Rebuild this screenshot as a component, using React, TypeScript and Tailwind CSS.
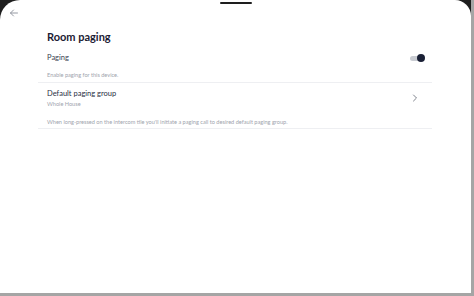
import React from "react";

export default function App() {
  return (
    <div className="w-[474px] h-[296px] bg-[#a5a5a5] pr-[3px] pb-[3px]" style={{ fontFamily: "Lato, 'Noto Sans', sans-serif" }}>
      <div className="w-full h-full bg-[#1e1e1e]">
        <div className="relative w-full h-full bg-white rounded-tl-[20px] rounded-tr-[16px]">
          <div className="absolute top-[2px] left-[220px] w-[32px] h-[2px] rounded-full bg-[#1e1e1e]" />
          <div className="pt-[8px] pl-[9px] h-[21px]">
            <svg width="10" height="10" viewBox="0 0 10 10" fill="none" stroke="#8a8f99" strokeWidth="0.9" strokeLinecap="round" strokeLinejoin="round">
              <path d="M8.5 5H1.5M4.5 2L1.5 5L4.5 8" />
            </svg>
          </div>
          <div className="ml-[38px] w-[394px]">
            <div className="pl-[9px] pt-[8px] h-[28px] text-[11px] leading-[16px] font-bold text-[#1c2033]">Room paging</div>
            <div className="border-b border-[#eeeff2] pl-[9px] pr-[7px] pb-[3px]">
              <div className="flex items-center justify-between h-[18px]">
                <span className="text-[7.5px] text-[#3a3f4f]">Paging</span>
                <div className="relative w-[15px] h-[9px] flex items-center">
                  <div className="w-[12px] h-[5px] rounded-full bg-[#c9ccd2]" />
                  <div className="absolute right-0 w-[8px] h-[8px] rounded-full bg-[#1a2036]" />
                </div>
              </div>
              <div className="mt-[4px] text-[5.6px] leading-[8px] text-[#a0a4ad]">Enable paging for this device.</div>
            </div>
            <div className="border-b border-[#eeeff2] pl-[9px] pr-[14px] pb-[2px]">
              <div className="flex items-center justify-between pt-[5px]">
                <div>
                  <div className="text-[7.5px] leading-[12px] text-[#2a2f3f]">Default paging group</div>
                  <div className="text-[5.6px] leading-[8px] text-[#a0a4ad]">Whole House</div>
                </div>
                <svg width="6" height="8" viewBox="0 0 6 8" fill="none" stroke="#70757f" strokeWidth="0.9" strokeLinecap="round" strokeLinejoin="round">
                  <path d="M1.5 1L4.5 4L1.5 7" />
                </svg>
              </div>
              <div className="mt-[10px] text-[5.6px] leading-[8px] text-[#a0a4ad]">
                When long-pressed on the intercom tile you'll initiate a paging call to desired default paging group.
              </div>
            </div>
          </div>
        </div>
      </div>
    </div>
  );
}
